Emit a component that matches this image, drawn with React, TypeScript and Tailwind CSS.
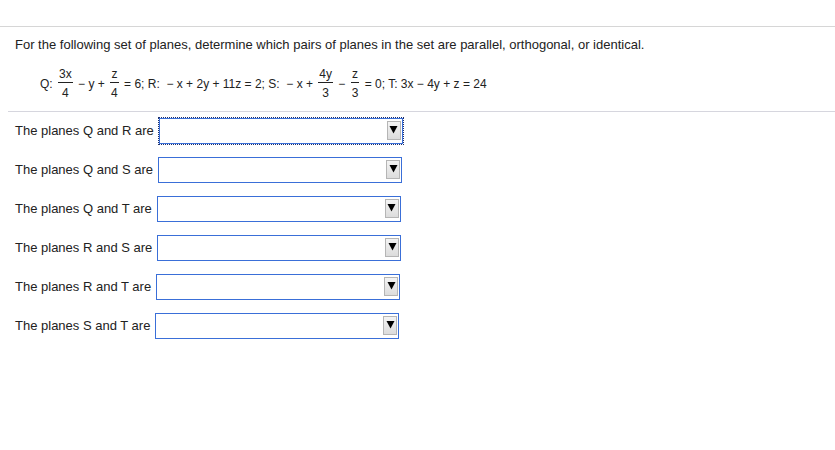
import React from 'react';

const pairs = [
    { label: 'The planes Q and R are', focused: true },
    { label: 'The planes Q and S are', focused: false },
    { label: 'The planes Q and T are', focused: false },
    { label: 'The planes R and S are', focused: false },
    { label: 'The planes R and T are', focused: false },
    { label: 'The planes S and T are', focused: false },
];

function Frac({ top, bottom }: { top: string; bottom: string }) {
    return (
        <span className="inline-flex flex-col items-center px-[2px]">
            <span className="leading-[14px] px-[1px] pb-[1px]">{top}</span>
            <span className="w-full border-t border-[#222]" />
            <span className="leading-[14px] px-[1px] pt-[3px]">{bottom}</span>
        </span>
    );
}

function Select({ focused }: { focused: boolean }) {
    return (
        <div
            className={
                'relative w-[244px] h-[26px] bg-white border border-[#3a6fd8] ' +
                (focused ? 'outline outline-1 outline-dotted outline-[#1d2f6b]' : '')
            }
        >
            <div className="absolute right-[1px] top-[2px] w-[14px] h-[19px] border border-[#b5b5b5] bg-gradient-to-b from-[#f4f4f4] to-[#dcdcdc] flex justify-center pt-[3px]">
                <svg width="9" height="9" viewBox="0 0 9 9">
                    <path d="M0.5 1 L8.5 1 L4.5 8.5 Z" fill="#000" />
                </svg>
            </div>
        </div>
    );
}

export default function App() {
    return (
        <div
            className="w-[835px] h-[450px] bg-white text-[#222] text-[13px]"
            style={{ fontFamily: '"Liberation Sans", Arial, sans-serif' }}
        >
            <div className="h-[26px]" />
            <div className="border-t border-[#d6d6d6] pt-[10px] px-[15px]">
                <p className="leading-[16px]">
                    For the following set of planes, determine which pairs of planes in the set are parallel, orthogonal, or identical.
                </p>

                {/* equation line */}
                <div className="flex items-center mt-[14px] pl-[25px] text-[12px] whitespace-pre">
                    <span>Q: </span>
                    <Frac top="3x" bottom="4" />
                    <span> − y + </span>
                    <Frac top="z" bottom="4" />
                    <span> = 6; R:  − x + 2y + 11z = 2; S:  − x + </span>
                    <Frac top="4y" bottom="3" />
                    <span> − </span>
                    <Frac top="z" bottom="3" />
                    <span> = 0; T: 3x − 4y + z = 24</span>
                </div>
            </div>

            <div className="ml-[8px] mt-[11px] border-t border-[#d6d6de]" />

            <div className="flex flex-col gap-[13px] pt-[6px] px-[15px]">
                {pairs.map(p => (
                    <div key={p.label} className="flex items-center gap-[5px]">
                        <span className="leading-[16px]">{p.label}</span>
                        <Select focused={p.focused} />
                    </div>
                ))}
            </div>
        </div>
    );
}
